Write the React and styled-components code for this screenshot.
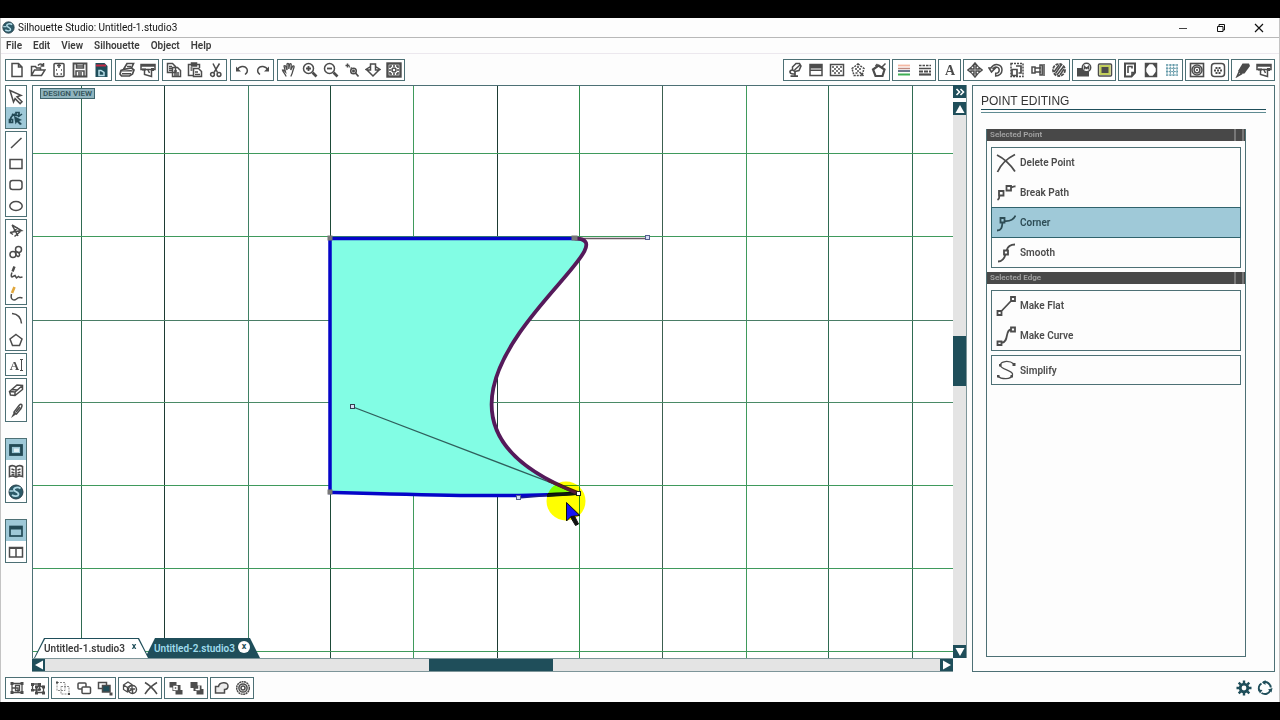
import React from 'react'
import styled, { ThemeProvider, createGlobalStyle } from 'styled-components'

const theme = {
  colors: {
    ink: '#4c4c4c',
    teal: '#1f4e5a',
    frame: '#4d7075',
    active: '#9fc9d8',
    track: '#e4e4e4',
    paper: '#fdfdfd',
  },
  fonts: {
    ui: 'Roboto, "Open Sans", sans-serif',
    heading: '"Liberation Sans", Arial, sans-serif',
  },
}

const GlobalStyle = createGlobalStyle`
  * {
    box-sizing: border-box;
  }
  body {
    margin: 0;
    background: #000;
    font-family: ${({ theme }) => theme.fonts.ui};
    color: ${({ theme }) => theme.colors.ink};
  }
  button {
    padding: 0;
    border: none;
    background: none;
    font: inherit;
    color: inherit;
  }
`

/* icons, all on a 16 unit box */

const solid = { fill: 'currentColor', stroke: 'none' }

const icons = {
  newFile: <path d="M3 1.500h6.500l3.500 3.500v9.500H3zM9.500 1.500v3.500h3.500" />,
  open: (
    <path d="M1.500 13.500V4.500h4l1 1.500h4v2M1.500 13.500l3-5.500h10.500l-3.500 5.500zM8 3.500c1.500-2 3.500-2 5 0M13.500 1v3h-3" />
  ),
  artboard: (
    <>
      <rect x="3" y="1.500" width="10" height="13" rx="1" />
      <path d="M8 2v4M6 3.500h4M5 8h1M10 8h1M5.500 12h1.500M9.500 12h1.500" />
    </>
  ),
  save: (
    <>
      <path d="M1.500 1.500h13v13h-13z" strokeWidth="1.800" />
      <path d="M4.500 2v4h7V2M4 14V9h8v5M6 11h4M6 13h4M5 4h6" />
    </>
  ),
  saveCard: (
    <>
      <path d="M2.500 1h9l3 3v11h-12z" fill="#1f4e5a" stroke="none" />
      <path d="M3 3.500h10" stroke="#c22b45" strokeWidth="2" />
      <path d="M6 8.500h2l3 2v3H6z" stroke="#b7dce6" />
    </>
  ),
  print: (
    <>
      <path d="M4.500 7.500L8 1.500h6.500L12.500 6M4.500 7.500l8-1.500 2.500 2-1.500 4-3 2H2.500L1 12l1-3.500z" strokeWidth="1.700" />
      <path d="M3 8.500l9-.5 2 .500-1 1H2zM3 11h9v1.500H3z" {...solid} />
      <path d="M8 4.500h4" />
    </>
  ),
  plotter: (
    <>
      <path d="M1 2.500h14v5H1z" />
      <path d="M1 2.500h14v2.200H1zM2 6.500h4v2H2zM11 6h3v3h-3z" {...solid} />
      <path d="M4.500 8v4.500l7 2V8M7.500 7l2 4" />
    </>
  ),
  copy: (
    <>
      <path d="M1.500 1.500h5l3 3v6h-8zM6.500 5.500h5l3 3v6h-8z" fill="#fff" />
      <path d="M3 4.500h3M3 6.500h3M3 8.500h3M8 9h3M8 11h5M8 13h5" />
    </>
  ),
  paste: (
    <>
      <path d="M6 13.500H1.500v-11h11V6M4.500 1h5v3h-5z" />
      <path d="M6.500 6.500h5l3 3v5h-8z" fill="#fff" />
      <path d="M8 10h3M8 12.500h5M3.500 6h2M3.500 8h2" />
    </>
  ),
  cut: (
    <>
      <path d="M5 1.500l4.500 9M11.500 1.500L6 10.500" strokeWidth="1.500" />
      <circle cx="4.500" cy="12.500" r="1.900" />
      <circle cx="11" cy="12.500" r="1.900" />
    </>
  ),
  undo: (
    <>
      <path d="M3 8c2-4 8-5 10-1 .8 2 0 4-2 5.500" />
      <path d="M2 4.500v5h5z" {...solid} />
    </>
  ),
  redo: (
    <>
      <path d="M13 8C11 4 5 3 3 7c-.8 2 0 4 2 5.500" />
      <path d="M14 4.500v5H9z" {...solid} />
    </>
  ),
  hand: (
    <path
      d="M5 14.500c0-2-3-4-3.500-6.500 1.500-.5 2 1 3 2L3 4c1-1 1.700 0 2 1l1 3V2c1-1 1.800-.3 1.800.5V7l.9-5c1-.7 1.700 0 1.500 1L9.800 8l2-4c1-.5 1.500.2 1.200 1.200L11.500 10c-.2 2-1.500 3-1.500 4.500"
      strokeWidth="1.300"
    />
  ),
  zoomIn: (
    <>
      <circle cx="6.500" cy="6.500" r="5" />
      <path d="M4 6.500h5M6.500 4v5" strokeWidth="1.800" />
      <path d="M10.500 10.500l4 4" strokeWidth="2.600" />
    </>
  ),
  zoomOut: (
    <>
      <circle cx="6.500" cy="6.500" r="5" />
      <path d="M4 6.500h5" strokeWidth="1.800" />
      <path d="M10.500 10.500l4 4" strokeWidth="2.600" />
    </>
  ),
  zoomDrag: (
    <>
      <path d="M1.500 3.500h4M3.500 1.500v4" />
      <path d="M5 4.500l3 2" strokeDasharray="1 1" />
      <circle cx="9.500" cy="9" r="2.800" />
      <path d="M8 9h3M9.500 7.500v3M11.500 11l3 3.500" strokeWidth="1.700" />
    </>
  ),
  zoomShape: (
    <path d="M5.500 2h5v6h3.500l-6 6-6-6h3.500zM5.500 4.500L1 7.500l1.500 1M10.500 4.500L15 7.500l-1.500 1" />
  ),
  fitPage: (
    <>
      <rect x="1.500" y="1.500" width="13" height="13" strokeWidth="2.400" />
      <circle cx="8" cy="8" r="2" />
      <path d="M4 6V4h2M10 4h2v2M12 10v2h-2M6 12H4v-2M8 3v2M8 11v2M3 8h2M11 8h2" strokeWidth="1.500" />
    </>
  ),
  lamp: (
    <>
      <path d="M5.500 5L9 1.500h3.500l1.500 2.500-2 4.500L8 9.500 5.500 8zM7.500 8L13 3" strokeWidth="1.500" />
      <path d="M5.500 8C2 8 2 12 6.500 12h1M3.500 14.200h7.500M8 9.500v4.500" strokeWidth="1.700" />
    </>
  ),
  fillColor: (
    <>
      <rect x="2" y="2.500" width="12" height="11" />
      <path d="M2 2.500h12v4H2zM2 7.500h12v1.500H2z" {...solid} />
    </>
  ),
  fillPattern: (
    <>
      <rect x="1.500" y="2.500" width="13" height="11" />
      <path d="M3 5h2M7 5h2M11 5h2M5 7h2M9 7h2M3 9h2M7 9h2M11 9h2M5 11h2M9 11h2" strokeWidth="1.500" />
    </>
  ),
  pentagonDots: (
    <>
      <path d="M8 2l6 4.500-2 7H4l-2-7z" strokeDasharray="2 1" />
      <path d="M8 4v2M5 7h2M9 7h2M7 9h2M5.500 11h2M9.500 10l4 4" strokeWidth="1.600" />
    </>
  ),
  pentagonPen: (
    <>
      <path d="M7.500 3.500l6 4-2 6.500H4.500L2 7.500z" strokeWidth="2.200" />
      <path d="M10 6l4.500-4.500M4.500 4l2-2" strokeWidth="1.500" />
    </>
  ),
  lineColor: (
    <>
      <path d="M2 3.500h12" stroke="#f4b8a4" strokeWidth="1.800" />
      <path d="M2 6.500h12" stroke="#c08a80" />
      <path d="M2 9h12" stroke="#3a4a66" />
      <path d="M2 12.500h12" stroke="#3fae55" strokeWidth="2" />
    </>
  ),
  lineStyle: (
    <>
      <path d="M2 3.500h12" strokeDasharray="2.500 1" />
      <path d="M2 6.500h12" strokeWidth="1.500" />
      <path d="M2 9.500h12" strokeDasharray="4 1" strokeWidth="1.800" />
      <path d="M2 12.500h12" strokeWidth="2.200" />
    </>
  ),
  letter: (
    <text x="8" y="13" textAnchor="middle" fontFamily="Liberation Serif, serif" fontWeight="700" fontSize="14" {...solid}>
      A
    </text>
  ),
  move: (
    <path d="M8 1l2.500 3H9v3h3V5.500L15 8l-3 2.500V9H9v3h1.500L8 15l-2.500-3H7V9H4v1.500L1 8l3-2.500V7h3V4H5.500z" />
  ),
  rotate: (
    <path d="M1 6l2.500 4L7 6.500H5.200c2-2.700 6-1.500 6 1.500 0 2-1.500 3.300-3.500 3.300v2.700c3.500 0 6.300-2.500 6.300-6C14 2 6.500.5 3 6z" />
  ),
  scale: (
    <>
      <path d="M2 1.500h12v13H2z" strokeDasharray="2 1" />
      <path d="M3 7.500h5v6H3zM7 4h5v7H9.500" strokeWidth="1.700" />
    </>
  ),
  align: (
    <>
      <path d="M5 6h6M5 10h6M2 5h3v6H2zM14 2v12" />
      <path d="M10 3h2.200v10H10z" />
    </>
  ),
  replicate: (
    <>
      <circle cx="8" cy="8" r="6" strokeDasharray="3 1" strokeWidth="1.800" />
      <path d="M3 10l5-7M6 13l7-9M4.500 11.500l6-9M9 13l4-6" strokeWidth="1.500" />
    </>
  ),
  modify: (
    <>
      <path d="M1 6h5l2 3h5v5.500H1z" {...solid} />
      <circle cx="10.500" cy="5.500" r="4.200" fill="#fff" />
      <path d="M8.500 7.500v-3l2 2 2-2v3" />
    </>
  ),
  trace: (
    <>
      <rect x="1.500" y="2" width="13" height="12" rx="1" />
      <rect x="3.500" y="4" width="9" height="8" stroke="#c3cf5c" strokeWidth="2" fill="#4c4c4c" />
    </>
  ),
  pageSetup: (
    <>
      <path d="M3 1.500h10v9l-3.500 4H3z" strokeWidth="2" />
      <path d="M6 4v7M6 4.500h4v2M10 14v-3.500h3" strokeWidth="1.600" />
    </>
  ),
  regMarks: (
    <>
      <rect x="2.500" y="1.500" width="11" height="13" />
      <path d="M3 2h3.500L3 6.500zM13 2H9.500L13 6.500zM3 14h3.500L3 9.500zM13 14H9.500L13 9.500z" {...solid} />
    </>
  ),
  grid: (
    <path
      d="M2 3h12M2 6.300h12M2 9.600h12M2 13h12M3 2v12M6.300 2v12M9.600 2v12M13 2v12"
      stroke="#5a93a3"
      strokeWidth="1"
      strokeDasharray="2 .6"
    />
  ),
  spiral: (
    <>
      <rect x="1.500" y="1.500" width="13" height="13" strokeWidth="1.600" />
      <circle cx="8" cy="8" r="5" />
      <circle cx="8" cy="8" r="2.900" />
      <circle cx="8" cy="8" r="1.100" {...solid} />
    </>
  ),
  stipple: (
    <>
      <rect x="1.500" y="1.500" width="13" height="13" rx="3" />
      <path
        d="M5.500 5h2v2h-2zM8.500 5h2v2h-2zM4 7.500h2v2H4zM7 7.500h2v2H7zM10 7.500h2v2h-2zM5.500 10h2v2h-2zM8.500 10h2v2h-2z"
        {...solid}
      />
    </>
  ),
  blade: (
    <>
      <path d="M7.500 1.500H14l1 2.500-5.500 7.500-4.500.5L3 9z" {...solid} />
      <path d="M4 10l-2 4.500 5-3" />
    </>
  ),
  pointer: <path d="M2 1.500l11 4.800-4 1.400 5 5-1.900 1.900-5-5L5.500 13z" />,
  editPoints: (
    <>
      <path d="M2 13c0-5 2-8 5-9M8 2.500h3v3H8zM1.500 9.500h3v3h-3zM4 4l3 2" strokeWidth="1.700" />
      <path d="M6 6l8 4-3 1 3 3-2 1-3-3-1.500 2.500z" {...solid} />
      <path d="M10 7l4-3" />
    </>
  ),
  line: <path d="M3 13L13.500 3" />,
  rect: <rect x="2" y="3.500" width="12" height="9" />,
  roundRect: <rect x="2" y="3.500" width="12" height="9" rx="2.500" />,
  ellipse: <ellipse cx="8" cy="8" rx="6.200" ry="4.500" />,
  polygonTool: <path d="M4 2l9.500 5.500L2 9.500M4 2l6 11M13.500 7.500L6.500 13.500M4.500 9.500L10 4.500M2 9.500l3 2" />,
  curveTool: (
    <>
      <circle cx="5" cy="10.500" r="3" />
      <circle cx="10.500" cy="5.500" r="3" />
      <path d="M7 7.500c2 0 5 1 4.500 3.500S8 12.500 7.500 9" />
    </>
  ),
  freehand: (
    <>
      <path d="M6.500 1.500l-2 5" strokeWidth="2.400" />
      <path d="M4 7.500c-1 2.500-1 4.500 0 4.500l3-1.500 1.500 2.500 2-1.500 1.500 1 2.500-.5" />
    </>
  ),
  smoothHand: (
    <>
      <path d="M6.500 1L4 7" stroke="#e0a63c" strokeWidth="2.600" />
      <path d="M3.500 8c-1.500 6 2.500 7 5 5 1.500-1.500 3-2 6-1" />
    </>
  ),
  arc: <path d="M4 2.500c5.500.5 9 4.500 9.500 10" />,
  pentagon: <path d="M8 2.500l6 4.500-2.500 6.500h-7L2 7z" />,
  textTool: (
    <>
      <text x="6.500" y="12.500" textAnchor="middle" fontFamily="Liberation Serif, serif" fontWeight="700" fontSize="13" {...solid}>
        A
      </text>
      <path d="M13.500 3v10M12 2.500h3M12 13.500h3" strokeWidth="1" />
    </>
  ),
  eraser: (
    <path d="M1.500 9.500L9 3l5.500.5v4L7 13.500l-4.500-.5zM1.500 9.500l5.500.5 7.500-6.500M7 10v3.500M4 7.500l5 .5" />
  ),
  knife: (
    <>
      <path d="M13.500 1.500c1 .5.5 2-.5 4L8.500 11 6 9l5-6.500c1-1 2-1.300 2.500-1z" />
      <path d="M6 9l2.500 2-5.500 4z" {...solid} />
      <path d="M8 9l4-5" />
    </>
  ),
  designPage: (
    <>
      <rect x="2.500" y="3.500" width="11" height="9" strokeWidth="2.800" />
      <rect x="6" y="6.500" width="5" height="3.500" fill="#dff0f5" stroke="none" />
    </>
  ),
  book: (
    <>
      <path d="M1.500 3.500C4 2 6 2.500 8 4c2-1.500 4-2 6.500-.5v10C12 12.500 10 13 8 14c-2-1-4-1.500-6.500-.5zM8 4v10" strokeWidth="1.600" />
      <path d="M3.500 6l3 1M3.500 9l3 1M12.500 6l-3 1M12.500 9l-3 1M3.500 11.500l3 .5M12.500 11.500l-3 .5" />
    </>
  ),
  brand: (
    <>
      <circle cx="8" cy="8" r="7" fill="#2c5a68" stroke="#27404a" strokeWidth="1" />
      <path
        d="M12.500 4.500C10 2.500 5.500 3.500 6 6c.4 1.800 5 2 4.500 4.500-.4 2-4 2.200-6.500.5"
        stroke="#b4dce8"
        strokeWidth="1.800"
      />
      <path d="M1.500 7h4" stroke="#b4dce8" strokeWidth="1.400" />
    </>
  ),
  singleView: (
    <>
      <rect x="2" y="3.500" width="12" height="9.500" strokeWidth="1.700" />
      <path d="M2 4h12v2.500H2z" {...solid} />
    </>
  ),
  splitView: (
    <>
      <path d="M1.500 3.500h13v9.500h-13zM8 4v9" />
      <path d="M1.500 3h13v2h-13z" {...solid} />
    </>
  ),
  group: (
    <>
      <path d="M3 3.500h10v9H3zM3 8h6v4.500M6.500 5.500h4v5h-4z" strokeWidth="1.300" />
      <path d="M1.500 2h3v3h-3zM11.500 2h3v3h-3zM1.500 11h3v3h-3zM11.500 11h3v3h-3z" {...solid} />
    </>
  ),
  ungroup: (
    <>
      <path d="M2.500 4h7v6h-7zM6.500 6.500h7v6h-7z" strokeWidth="1.300" />
      <path
        d="M1 3h3v3H1zM8 3h3v3H8zM1 9h3v2.500H1zM5 5.500h3v3H5zM12 5.500h3v3h-3zM5 11.500h3v3H5zM12 11.500h3v3h-3zM8 8.500h3v2H8z"
        {...solid}
      />
    </>
  ),
  selectAll: (
    <>
      <path d="M2 2.500h8v8H2zM6 6.500h8v7.500H6z" stroke="#8a8a8a" strokeWidth="1" strokeDasharray="2 1" />
      <path d="M13 13h2v2h-2zM1 1.500h2v2H1z" {...solid} />
    </>
  ),
  duplicate: (
    <>
      <rect x="2" y="3" width="8" height="6" rx="1" />
      <rect x="6" y="7" width="8.500" height="6.500" rx="1" fill="#fff" />
    </>
  ),
  bringFront: (
    <>
      <rect x="1.500" y="2.500" width="8" height="6" />
      <rect x="5.500" y="5.500" width="7.500" height="6.500" fill="#1f4e5a" />
      <path d="M12.500 12.500h3v3h-3z" {...solid} />
    </>
  ),
  weld: (
    <>
      <path d="M1.500 5L6 2l4 2.500v5L5.500 12 1.500 9.500zM1.500 5l4 2.500L10 4.500M5.500 7.500V12" strokeWidth="1.300" />
      <circle cx="10.500" cy="9.500" r="4" />
      <path d="M8 9h5M10.500 9v4" />
    </>
  ),
  remove: <path d="M2 2.500c5 3 9 7 12 11.500M14 2.500C9 5.500 5 9 2 14" />,
  joinA: (
    <>
      <path d="M1.500 2h7v3h4v5h2v4.500h-7V11h-3V7.500h-3z" {...solid} />
      <path d="M6 6.500h3v3H6z" stroke="#fff" />
    </>
  ),
  joinB: (
    <>
      <path d="M1.500 2h7v3.500h4V9h2v5.500h-7V11h-3V8h-3z" {...solid} />
      <path d="M6.500 9.500h3.500v-4" stroke="#fff" />
    </>
  ),
  shape: (
    <path d="M1.500 6.500h3C5 2 14 1 14 6c0 2-1.500 3.500-3.500 3.500V13h-9z" fill="#ececec" />
  ),
  target: (
    <>
      <circle cx="8" cy="8" r="6.300" strokeDasharray="2 .5" />
      <circle cx="8" cy="8" r="4.100" />
      <circle cx="8" cy="8" r="2" />
    </>
  ),
  gear: (
    <>
      <circle cx="8" cy="8" r="3.800" strokeWidth="2.800" />
      <path
        d="M8 .5v3M8 12.500v3M.5 8h3M12.500 8h3M2.700 2.700l2 2M11.300 11.300l2 2M2.700 13.300l2-2M11.300 4.700l2-2"
        strokeWidth="2.400"
      />
    </>
  ),
  sync: (
    <>
      <path d="M6 2.500c4-1.500 7.500 1.500 7.800 5M13.500 10c-1.500 4-5.500 5-9 3M2.500 11C1 8 2 5 4.500 3.500" strokeWidth="2" />
      <path d="M8.500 0v5L5 2.500zM15.500 8l-1 4.500-3.500-3zM1 9.500l4.500.5L3 13.500z" {...solid} />
    </>
  ),
}

/* larger glyphs of the point editing list, on a 20 unit box */

const pointIcons = {
  remove: <path d="M1 2c7 3.500 13 9 18 16.500M19 1.500C12 5 5 11 1.500 19" />,
  breakPath: <path d="M3 8h4.500v4.500H3zM3.500 12.500c0 2.500-.5 3.500-2 4.500M10.500 3H15v4.500h-4.500zM15 4.500c1.500 0 2-1.500 4.500-1" />,
  corner: <path d="M1 17.500c5 0 5-4 5.500-8M4.500 5h4v4.500h-4zM8.500 8c6 .5 9-1 11-5.500" />,
  smooth: <path d="M2 18.500c5 0 6.500-3.500 7.500-7M8 7.500h4v4H8zM10.500 7.500C11.500 4 14 1.500 19 1.500" />,
  flat: <path d="M1.500 15h4v4h-4zM15 1h4v4h-4zM5.500 15L15 5" />,
  curve: <path d="M1.500 15.500h4v3.500h-4zM15 1.500h4v4h-4zM5.500 17c8-1 3-13 9.500-13.500" />,
  simplify: (
    <>
      <path d="M18 4C13 0 4 1 4.500 5.500S18 10 16.500 15s-11 4.500-15 1" strokeWidth="1.300" />
      <path d="M16.500 3h3v3h-3zM3 4h2.500v2.500H3zM14.500 15H17v2.500h-2.500zM1 15h2.500v2.500H1z" {...solid} />
    </>
  ),
}

const Svg = styled.svg`
  display: block;
  flex: none;
  width: ${({ $size }) => $size || 16}px;
  height: ${({ $size }) => $size || 16}px;
  fill: none;
  stroke: currentColor;
  stroke-width: ${({ $stroke }) => $stroke || 1.5};
`

const Icon = ({ name, size }) => (
  <Svg viewBox="0 0 16 16" $size={size} aria-hidden="true">
    {icons[name]}
  </Svg>
)

const Window = styled.div`
  display: flex;
  flex-direction: column;
  min-height: calc(100vh - 36px);
  margin: 18px 0;
  border: solid #c4c4c4;
  border-width: 0 1px;
  background: ${({ theme }) => theme.colors.paper};
`

const TitleBar = styled.header`
  display: flex;
  align-items: center;
  gap: 3px;
  height: 20px;
  padding: 0 12px 0 1px;
  border-bottom: 1px solid #b8b8b8;
  font-size: 10px;
  color: #111;
  h1 {
    flex: 1;
    margin: 0;
    font-size: inherit;
    font-weight: 400;
  }
`

const WindowControls = styled.div`
  display: flex;
  gap: 22px;
  button {
    display: grid;
    place-items: center;
    width: 16px;
    height: 16px;
  }
`

const MenuBar = styled.nav`
  display: flex;
  gap: 11px;
  height: 16px;
  padding: 0 5px;
  border-bottom: 1px solid #ece8ee;
  font-size: 10px;
  font-weight: 600;
  line-height: 15px;
  color: #3c3c3c;
`

const Toolbar = styled.div`
  display: flex;
  justify-content: space-between;
  align-items: center;
  padding: ${({ $bottom }) => ($bottom ? '5px 4px 3px' : '5px 4px 4px')};
`

const Groups = styled.div`
  display: flex;
  gap: ${({ $gap = 2 }) => $gap}px;
  color: ${({ $teal, theme }) => ($teal ? theme.colors.teal : 'inherit')};
`

const Group = styled.div`
  display: flex;
  flex-direction: ${({ $column }) => ($column ? 'column' : 'row')};
  border: 1px solid ${({ theme }) => theme.colors.frame};
  margin-top: ${({ $apart }) => ($apart ? 14 : 0)}px;
  background: #fff;
`

const Tool = styled.button`
  display: grid;
  place-items: center;
  width: ${({ $column }) => ($column ? 20 : 21)}px;
  height: ${({ $column }) => ($column ? 21 : 20)}px;
  background: ${({ $active, theme }) => ($active ? theme.colors.active : 'none')};
  color: ${({ $active }) => ($active ? '#234a56' : 'inherit')};
  &:hover {
    background: ${({ theme }) => theme.colors.active};
  }
`

const Main = styled.main`
  display: flex;
  flex: 1;
  padding-right: 4px;
`

const SideBar = styled.aside`
  display: flex;
  flex-direction: column;
  align-items: flex-start;
  gap: 2px;
  width: 31px;
  padding: 0 4px;
`

const Workspace = styled.section`
  display: grid;
  flex: 1;
  grid-template-columns: minmax(0, 1fr) 14px;
  grid-template-rows: minmax(0, 1fr) 14px;
  margin-right: 5px;
`

const Canvas = styled.div`
  position: relative;
  min-height: 480px;
  overflow: hidden;
  border: solid ${({ theme }) => theme.colors.frame};
  border-width: 1px 0 0 1px;
  background: #fff;
`

const Drawing = styled.svg`
  position: absolute;
  inset: 0;
  width: 100%;
  height: 100%;
`

const ViewTag = styled.span`
  position: absolute;
  top: 2px;
  left: 7px;
  padding: 0 2px;
  border: 1px solid #3e646c;
  background: #8fb4be;
  color: #34545c;
  font-size: 8px;
  font-weight: 600;
  line-height: 9px;
`

const Tabs = styled.div`
  position: absolute;
  bottom: 0;
  left: 1px;
  display: flex;
`

const Tab = styled.div`
  position: relative;
  display: flex;
  align-items: center;
  gap: 3px;
  height: 20px;
  margin-left: ${({ $active }) => ($active ? 0 : -4)}px;
  padding: ${({ $active }) => ($active ? '0 9px 0 10px' : '0 10px 0 9px')};
  z-index: ${({ $active }) => ($active ? 1 : 0)};
  clip-path: polygon(10px 0, calc(100% - 10px) 0, 100% 100%, 0 100%);
  background: ${({ theme }) => theme.colors.teal};
  color: ${({ $active }) => ($active ? '#3c3c3c' : '#9fdcec')};
  font-size: 10px;
  font-weight: 600;
  &::before {
    content: '';
    display: ${({ $active }) => ($active ? 'block' : 'none')};
    position: absolute;
    inset: 1px 1px 0;
    z-index: -1;
    clip-path: polygon(10px 0, calc(100% - 10px) 0, 100% 100%, 0 100%);
    background: #fff;
  }
`

const TabClose = styled.button`
  display: grid;
  place-items: center;
  width: 12px;
  height: 12px;
  margin-bottom: 3px;
  border-radius: 50%;
  background: #fff;
  color: #1f4e5a;
  font-size: 9px;
  font-weight: 700;
  line-height: 9px;
`

const ScrollBar = styled.div`
  display: flex;
  flex-direction: ${({ $vertical }) => ($vertical ? 'column' : 'row')};
  border: solid #7d9599;
  border-width: ${({ $vertical }) => ($vertical ? '0 1px 0 0' : '1px 0')};
  background: ${({ theme }) => theme.colors.track};
`

const ScrollButton = styled.button`
  display: grid;
  flex: none;
  place-items: center;
  width: 13px;
  height: ${({ $vertical }) => ($vertical ? '13px' : '100%')};
  margin-bottom: ${({ $gap }) => ($gap ? 4 : 0)}px;
  box-shadow: ${({ $gap }) => ($gap ? '0 4px #fdfdfd' : 'none')};
  background: ${({ theme }) => theme.colors.teal};
  color: #fff;
`

const Track = styled.div`
  display: flex;
  flex: 1;
  flex-direction: ${({ $vertical }) => ($vertical ? 'column' : 'row')};
  &::before {
    content: '';
    flex: ${({ $before }) => $before};
  }
  &::after {
    content: '';
    flex: ${({ $after }) => $after};
  }
`

const Thumb = styled.div`
  flex: ${({ $span }) => $span};
  background: ${({ theme }) => theme.colors.teal};
`

const Panel = styled.section`
  display: flex;
  flex-direction: column;
  width: 303px;
  padding: 8px 8px 14px;
  border: 1px solid ${({ theme }) => theme.colors.frame};
  h2 {
    margin: 0;
    padding-bottom: 1px;
    border-bottom: 1px solid #1f4e5a;
    font-family: ${({ theme }) => theme.fonts.heading};
    font-size: 12px;
    font-weight: 400;
    line-height: 14px;
    color: #333;
  }
`

const Rule = styled.div`
  height: 3px;
  border-bottom: 1px solid #5f8b92;
`

const PanelBody = styled.div`
  flex: 1;
  margin: 16px 20px 0 5px;
  border: 1px solid ${({ theme }) => theme.colors.frame};
  border-top: none;
`

const SectionTitle = styled.h3`
  display: flex;
  justify-content: space-between;
  height: 12px;
  margin: 0;
  padding: 0 1px 0 3px;
  background: #484848;
  color: #a4a4a4;
  font-size: 8px;
  font-weight: 600;
  line-height: 12px;
  &::after {
    content: '';
    width: 6px;
    border: solid #777;
    border-width: 0 2px;
  }
`

const ActionList = styled.div`
  margin: ${({ $tight }) => ($tight ? '4px' : '6px 4px 4px')};
  border: 1px solid ${({ theme }) => theme.colors.frame};
`

const Action = styled.button`
  display: flex;
  align-items: center;
  gap: 4px;
  width: 100%;
  height: ${({ $single }) => ($single ? 28 : 29)}px;
  padding: 0 4px;
  background: ${({ $active, theme }) => ($active ? theme.colors.active : 'none')};
  box-shadow: ${({ $active }) => ($active ? '0 0 0 1px #2f626c' : 'none')};
  color: ${({ $active }) => ($active ? '#2d4c55' : 'inherit')};
  font-size: 10px;
  font-weight: 600;
  & + & {
    margin-top: 1px;
  }
`

const fileTools = [
  ['newFile', 'open', 'artboard', 'save', 'saveCard'],
  ['print', 'plotter'],
  ['copy', 'paste', 'cut'],
  ['undo', 'redo'],
  ['hand', 'zoomIn', 'zoomOut', 'zoomDrag', 'zoomShape', 'fitPage'],
]

const panelTools = [
  ['lamp', 'fillColor', 'fillPattern', 'pentagonDots', 'pentagonPen'],
  ['lineColor', 'lineStyle'],
  ['letter'],
  ['move', 'rotate', 'scale', 'align', 'replicate'],
  ['modify', 'trace'],
  ['pageSetup', 'regMarks', 'grid'],
  ['spiral', 'stipple'],
  ['blade', 'plotter'],
]

const drawTools = [
  ['pointer', 'editPoints'],
  ['line', 'rect', 'roundRect', 'ellipse'],
  ['polygonTool', 'curveTool', 'freehand', 'smoothHand'],
  ['arc', 'pentagon'],
  ['textTool'],
  ['eraser', 'knife'],
  ['designPage', 'book', 'brand'],
  ['singleView', 'splitView'],
]

const arrangeTools = [
  ['group', 'ungroup'],
  ['selectAll', 'duplicate', 'bringFront'],
  ['weld', 'remove'],
  ['joinA', 'joinB'],
  ['shape', 'target'],
]

const activeTools = ['editPoints', 'designPage', 'singleView']
const apartFrom = ['designPage', 'singleView']

const ToolGroups = ({ groups, column }) =>
  groups.map(names => (
    <Group key={names[0]} $column={column} $apart={apartFrom.includes(names[0])}>
      {names.map(name => (
        <Tool
          key={name}
          type="button"
          aria-label={name}
          $column={column}
          $active={activeTools.includes(name)}
        >
          <Icon name={name} />
        </Tool>
      ))}
    </Group>
  ))

const columns = [
  [48, '#2f6b52'],
  [131, '#1d3b33'],
  [215, '#3f8064'],
  [297, '#1d4a38'],
  [380, '#3f9a5c'],
  [464, '#1d3b33'],
  [546, '#2f8f4c'],
  [629, '#3c5f50'],
  [713, '#3f9a5c'],
  [795, '#2f6b52'],
  [879, '#2f6b52'],
]

const rows = [
  [67, '#3f9a5c'],
  [150, '#3f9a5c'],
  [234, '#4a7d66'],
  [316, '#4a8a66'],
  [399, '#3f9a5c'],
  [482, '#3f9a5c'],
  [565, '#3f9a5c'],
]

const Artwork = () => (
  <Drawing role="img" aria-label="Drawing area">
    <g shapeRendering="crispEdges">
      {columns.map(([x, color]) => (
        <line key={x} x1={x + 0.5} x2={x + 0.5} y1="0" y2="100%" stroke={color} />
      ))}
      {rows.map(([y, color]) => (
        <line key={y} x1="0" x2="100%" y1={y + 0.5} y2={y + 0.5} stroke={color} />
      ))}
    </g>
    <path
      d="M297 152.500H541.500C614 152.500 320 321 545 407C485 412 367 408.500 297 406.500z"
      fill="#82fde4"
    />
    <path d="M545 407C485 412 367 408.500 297 406.500V152.500H541.500" fill="none" stroke="#0505c8" strokeWidth="3.500" />
    <path d="M541.500 152.500H615" stroke="#6d5a66" strokeWidth="1.500" />
    <path d="M320 321L545 407" stroke="#2f5f5c" strokeWidth="1.300" />
    <path d="M541.500 152.500C614 152.500 320 321 545 407" fill="none" stroke="#551a5a" strokeWidth="3.800" />
    <circle cx="533" cy="415" r="19.500" fill="#ffff00" style={{ mixBlendMode: 'multiply' }} />
    <path d="M485 412L545 407" stroke="#1c1c90" strokeWidth="1.300" />
    <path d="M514 409.500L545 407.500" stroke="#101a10" strokeWidth="3.200" />
    <path d="M515 394.500L543 407" stroke="#551a3a" strokeWidth="3" />
    <g fill="#777">
      <rect x="294.500" y="149.500" width="5" height="5" />
      <rect x="538.500" y="149.500" width="6" height="5" />
      <rect x="294.500" y="403.500" width="5" height="5" />
    </g>
    <g fill="#d6dcf5" stroke="#55608f">
      <rect x="612.500" y="149.500" width="4" height="4" />
      <rect x="317.500" y="318.500" width="4" height="4" stroke="#33404f" />
      <rect x="483.500" y="409.500" width="4" height="4" />
      <rect x="543.500" y="405.500" width="4" height="4" fill="#fff" stroke="#222" />
    </g>
    <path
      d="M533.500 416.500V435L537.500 431L542.500 439.500L545.500 438L541.500 430L547 429.500z"
      fill="#111"
      stroke="#111"
      strokeLinejoin="round"
    />
    <path d="M534 417.500V434L538 430L545.500 429z" fill="#1414f5" />
  </Drawing>
)

const Arrow = ({ d }) => (
  <Svg viewBox="0 0 10 10" $size={10} aria-hidden="true">
    <path d={d} {...solid} />
  </Svg>
)

const ActionItem = ({ icon, label, active, single }) => (
  <Action type="button" $active={active} $single={single}>
    <Svg viewBox="0 0 20 20" $size={20} $stroke={1.8} aria-hidden="true">
      {pointIcons[icon]}
    </Svg>
    {label}
  </Action>
)

const PointEditing = () => (
  <Panel>
    <h2>POINT EDITING</h2>
    <Rule />
    <PanelBody>
      <SectionTitle>Selected Point</SectionTitle>
      <ActionList>
        <ActionItem icon="remove" label="Delete Point" />
        <ActionItem icon="breakPath" label="Break Path" />
        <ActionItem icon="corner" label="Corner" active />
        <ActionItem icon="smooth" label="Smooth" />
      </ActionList>
      <SectionTitle>Selected Edge</SectionTitle>
      <ActionList>
        <ActionItem icon="flat" label="Make Flat" />
        <ActionItem icon="curve" label="Make Curve" />
      </ActionList>
      <ActionList $tight>
        <ActionItem icon="simplify" label="Simplify" single />
      </ActionList>
    </PanelBody>
  </Panel>
)

export default function App() {
  return (
    <ThemeProvider theme={theme}>
      <GlobalStyle />
      <Window>
        <TitleBar>
          <Icon name="brand" size={13} />
          <h1>Silhouette Studio: Untitled-1.studio3</h1>
          <WindowControls>
            <button type="button" aria-label="Minimize">
              <Svg viewBox="0 0 10 10" $size={10} $stroke={0.8}>
                <path d="M1 5.500h8" />
              </Svg>
            </button>
            <button type="button" aria-label="Restore">
              <Svg viewBox="0 0 10 10" $size={10} $stroke={1}>
                <path d="M1.500 3.500h5.500v5H1.500zM3 3.500v-2h5.500V7H7" />
              </Svg>
            </button>
            <button type="button" aria-label="Close">
              <Svg viewBox="0 0 10 10" $size={10} $stroke={1.2}>
                <path d="M1 1l8 8M9 1L1 9" />
              </Svg>
            </button>
          </WindowControls>
        </TitleBar>
        <MenuBar>
          {['File', 'Edit', 'View', 'Silhouette', 'Object', 'Help'].map(item => (
            <button key={item} type="button">
              {item}
            </button>
          ))}
        </MenuBar>
        <Toolbar>
          <Groups $gap={3}>
            <ToolGroups groups={fileTools} />
          </Groups>
          <Groups>
            <ToolGroups groups={panelTools} />
          </Groups>
        </Toolbar>
        <Main>
          <SideBar>
            <ToolGroups groups={drawTools} column />
          </SideBar>
          <Workspace>
            <Canvas>
              <Artwork />
              <ViewTag>DESIGN VIEW</ViewTag>
              <Tabs>
                <Tab $active>
                  <button type="button">Untitled-1.studio3</button>
                  <TabClose type="button" aria-label="Close Untitled-1">
                    x
                  </TabClose>
                </Tab>
                <Tab>
                  <button type="button">Untitled-2.studio3</button>
                  <TabClose type="button" aria-label="Close Untitled-2">
                    x
                  </TabClose>
                </Tab>
              </Tabs>
            </Canvas>
            <ScrollBar $vertical>
              <ScrollButton type="button" aria-label="Collapse panel" $vertical $gap>
                <Svg viewBox="0 0 10 10" $size={10} $stroke={1.6}>
                  <path d="M1.500 2l3 3-3 3M5.500 2l3 3-3 3" />
                </Svg>
              </ScrollButton>
              <ScrollButton type="button" aria-label="Scroll up" $vertical>
                <Arrow d="M5 1l4.500 8h-9z" />
              </ScrollButton>
              <Track $vertical $before={221} $after={259}>
                <Thumb $span={51} />
              </Track>
              <ScrollButton type="button" aria-label="Scroll down" $vertical>
                <Arrow d="M5 9L.5 1h9z" />
              </ScrollButton>
            </ScrollBar>
            <ScrollBar>
              <ScrollButton type="button" aria-label="Scroll left">
                <Arrow d="M1 5l8-4.500v9z" />
              </ScrollButton>
              <Track $before={384} $after={387}>
                <Thumb $span={124} />
              </Track>
              <ScrollButton type="button" aria-label="Scroll right">
                <Arrow d="M9 5L1 .5v9z" />
              </ScrollButton>
            </ScrollBar>
          </Workspace>
          <PointEditing />
        </Main>
        <Toolbar $bottom>
          <Groups>
            <ToolGroups groups={arrangeTools} />
          </Groups>
          <Groups $gap={0} $teal>
            <Tool type="button" aria-label="Preferences">
              <Icon name="gear" />
            </Tool>
            <Tool type="button" aria-label="Sync">
              <Icon name="sync" />
            </Tool>
          </Groups>
        </Toolbar>
      </Window>
    </ThemeProvider>
  )
}
